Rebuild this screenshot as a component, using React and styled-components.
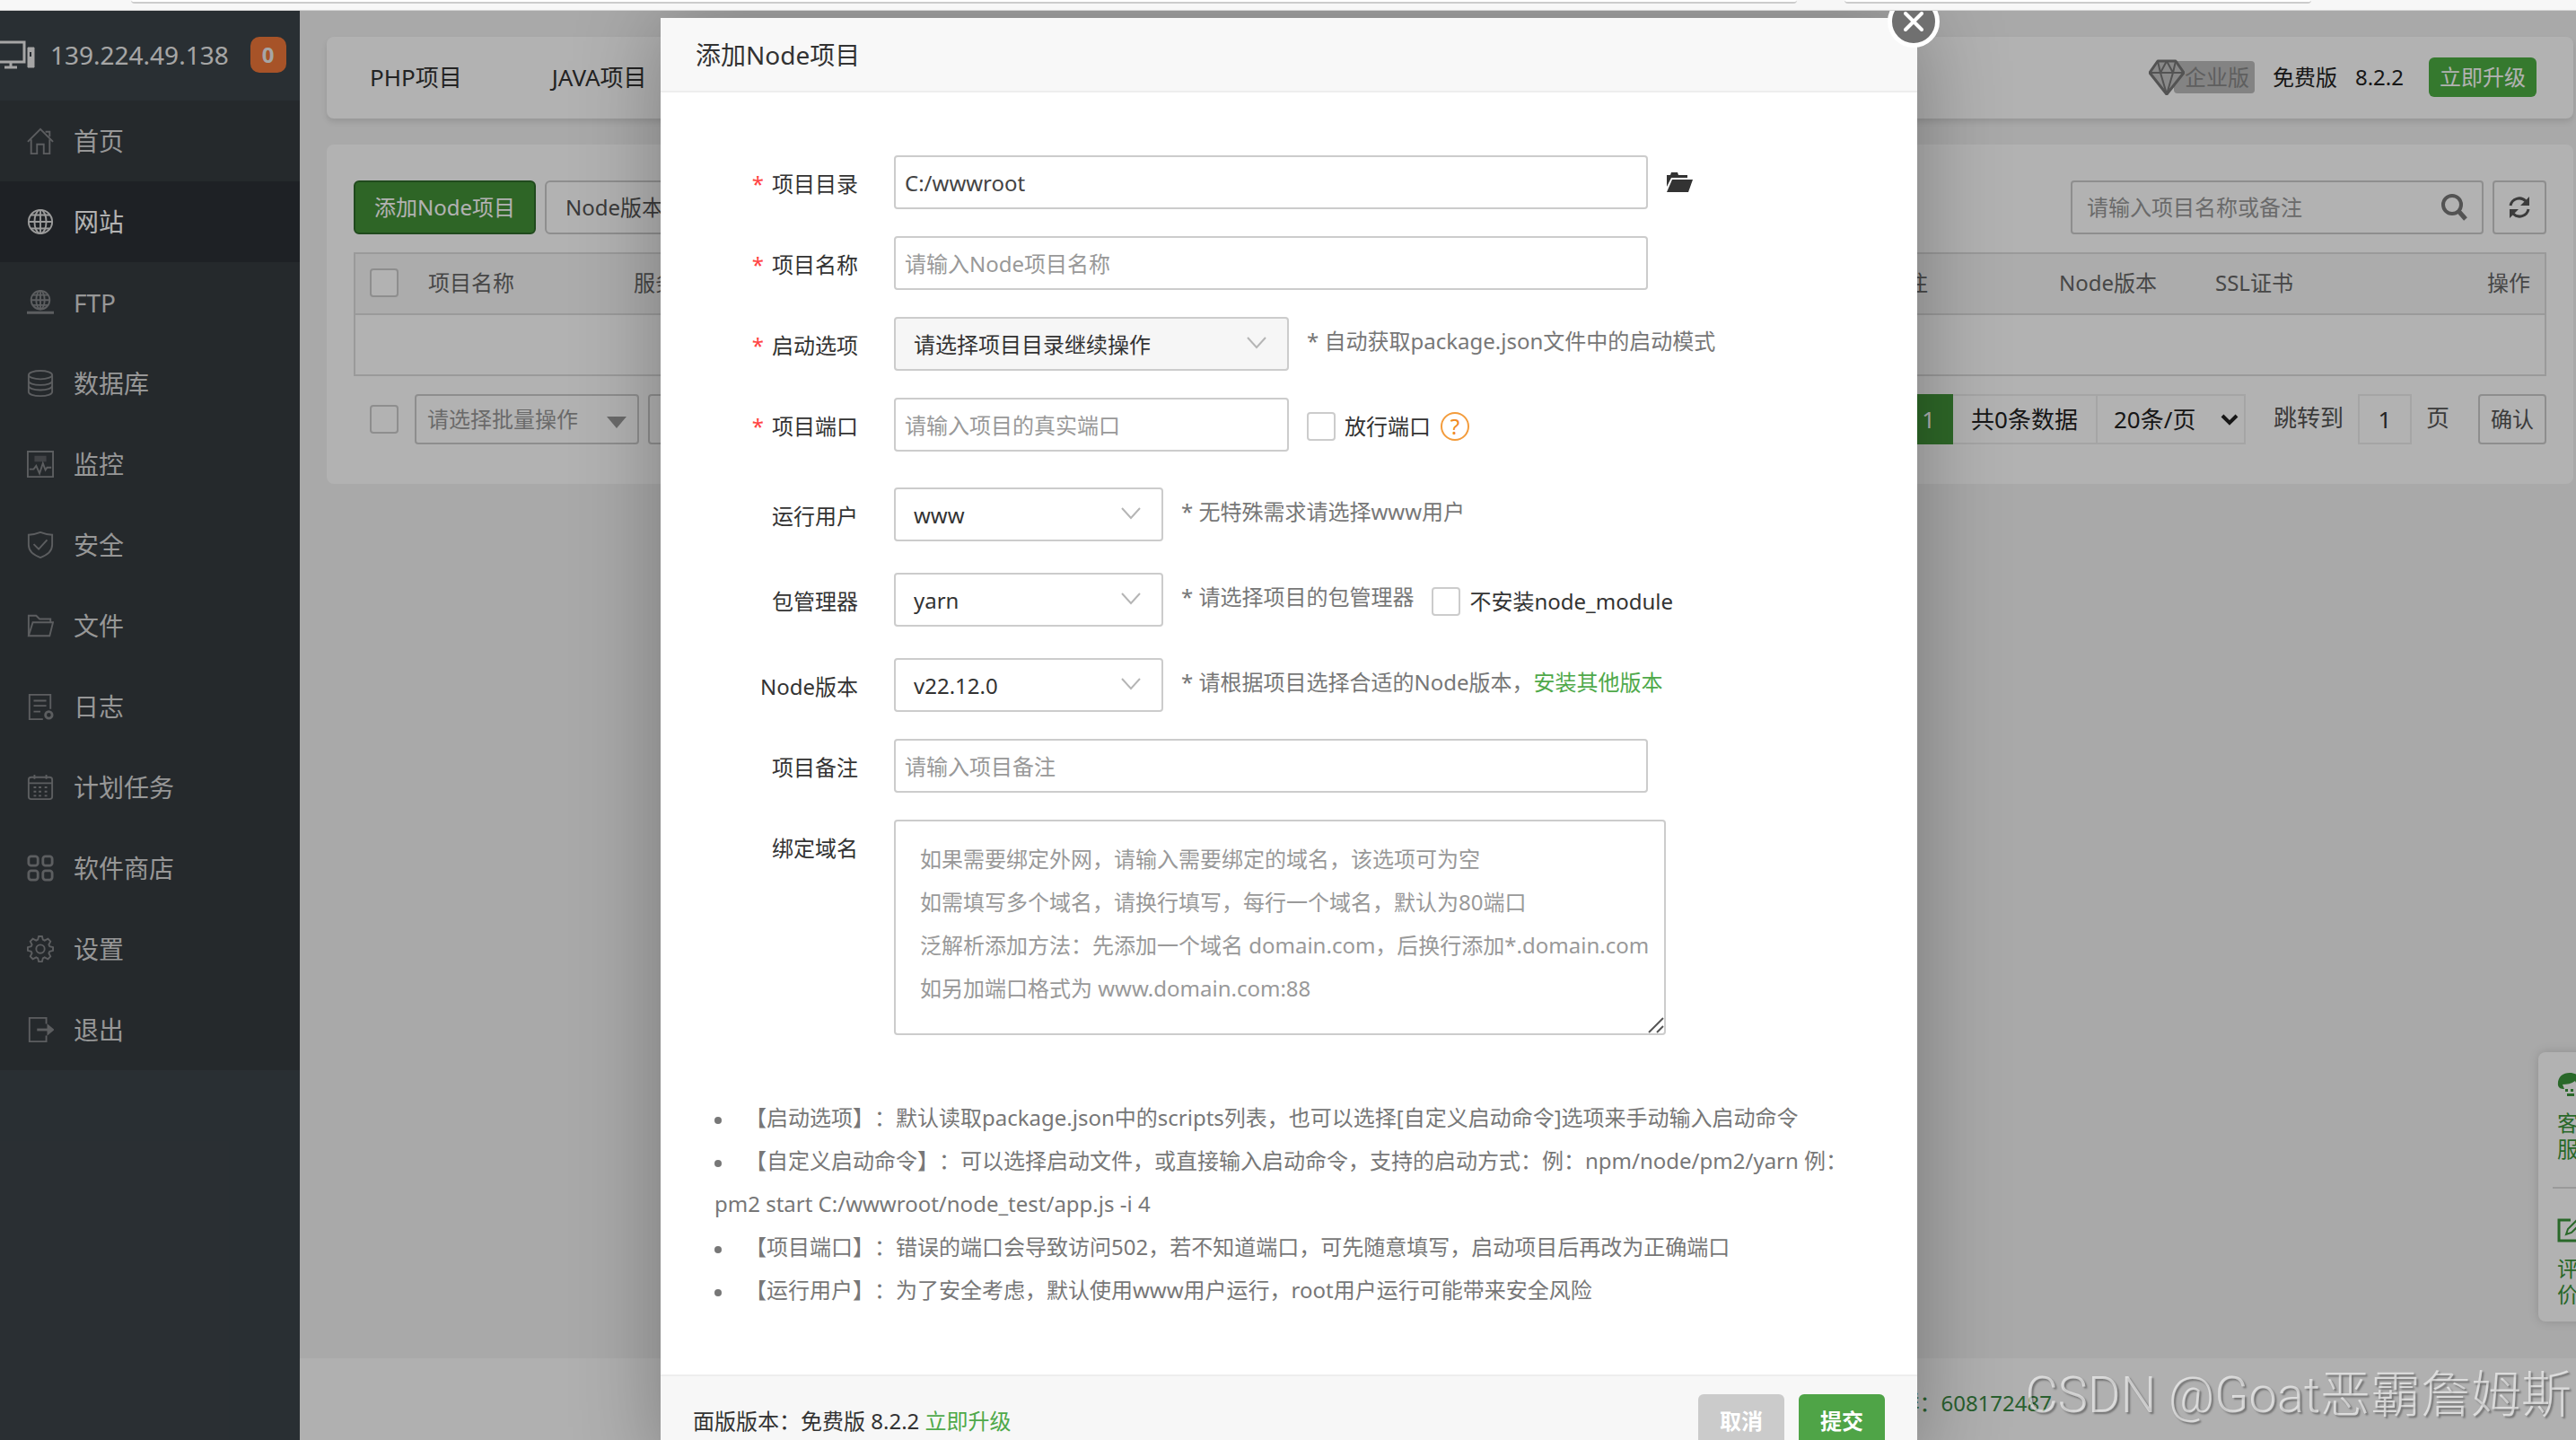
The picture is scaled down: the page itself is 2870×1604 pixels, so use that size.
import React from 'react';
import styled, { createGlobalStyle } from 'styled-components';

const menus = [
  { name: '首页', icon: 'home' },
  { name: '网站', icon: 'globe', active: true },
  { name: 'FTP', icon: 'ftp' },
  { name: '数据库', icon: 'database' },
  { name: '监控', icon: 'monitor' },
  { name: '安全', icon: 'shield' },
  { name: '文件', icon: 'folder' },
  { name: '日志', icon: 'log' },
  { name: '计划任务', icon: 'calendar' },
  { name: '软件商店', icon: 'grid' },
  { name: '设置', icon: 'gear' },
  { name: '退出', icon: 'exit' },
];

const tips = [
  '【启动选项】：默认读取package.json中的scripts列表，也可以选择[自定义启动命令]选项来手动输入启动命令',
  '【自定义启动命令】：可以选择启动文件，或直接输入启动命令，支持的启动方式：例：npm/node/pm2/yarn 例：pm2 start C:/wwwroot/node_test/app.js -i 4',
  '【项目端口】：错误的端口会导致访问502，若不知道端口，可先随意填写，启动项目后再改为正确端口',
  '【运行用户】：为了安全考虑，默认使用www用户运行，root用户运行可能带来安全风险',
];

const domainPlaceholder = [
  '如果需要绑定外网，请输入需要绑定的域名，该选项可为空',
  '如需填写多个域名，请换行填写，每行一个域名，默认为80端口',
  '泛解析添加方法：先添加一个域名 domain.com，后换行添加*.domain.com',
  '如另加端口格式为 www.domain.com:88',
].join('\n');

const menuIcons = {
  home: (
    <>
      <path d="M1 17 16 2l15 15" />
      <path d="M5 14v17h7V20h8v11h7V14" />
      <path d="M22 5h5v6" />
    </>
  ),
  globe: (
    <>
      <circle cx="16" cy="16" r="14" />
      <ellipse cx="16" cy="16" rx="7" ry="14" />
      <path d="M16 2v28M2 16h28M5 8h22M5 24h22" />
    </>
  ),
  ftp: (
    <>
      <circle cx="16" cy="13" r="11" />
      <ellipse cx="16" cy="13" rx="5" ry="11" />
      <path d="M16 2v22M5 13h22M7 7h18M7 19h18" />
      <path d="M0 28h32M12 28h8" strokeWidth="3" />
    </>
  ),
  database: (
    <>
      <ellipse cx="16" cy="6" rx="14" ry="5" />
      <path d="M2 6v20c0 3 6 5 14 5s14-2 14-5V6" />
      <path d="M2 13c0 3 6 5 14 5s14-2 14-5M2 19c0 3 6 5 14 5s14-2 14-5" />
    </>
  ),
  monitor: (
    <>
      <path d="M1 1h30v30H1z" />
      <path d="M10 7h12v5H10z" fill="currentColor" opacity="0.5" />
      <path d="M3 22h5l3-4 4 9 4-12 3 8 2-3h5" />
    </>
  ),
  shield: (
    <>
      <path d="M16 1c5 2 9 3 14 3v12c0 7-6 12-14 15C8 28 2 23 2 16V4c5 0 9-1 14-3z" />
      <path d="m8 15 6 6 10-11" />
    </>
  ),
  folder: (
    <>
      <path d="M2 28V4h9l4 4h13v4" />
      <path d="M2 28 7 12h24l-4 16z" />
    </>
  ),
  log: (
    <>
      <path d="M19 31H3V2h25v17" />
      <path d="M8 9h15M8 15h15M8 22h8" />
      <circle cx="26" cy="26" r="4" strokeWidth="3" />
    </>
  ),
  calendar: (
    <>
      <rect x="2" y="4" width="28" height="26" rx="3" />
      <path d="M2 11h28M9 1v5M23 1v5" />
      <path d="M8 16h3M14 16h3M21 16h3M8 21h3M14 21h3M21 21h3M8 26h3M14 26h3M21 26h3" />
    </>
  ),
  grid: (
    <>
      <rect x="2" y="2" width="11" height="11" rx="3" strokeWidth="3" />
      <rect x="19" y="2" width="11" height="11" rx="3" strokeWidth="3" />
      <rect x="2" y="19" width="11" height="11" rx="3" strokeWidth="3" />
      <rect x="19" y="19" width="11" height="11" rx="3" strokeWidth="3" />
    </>
  ),
  gear: (
    <>
      <path d="M14 1h4l1 4 2 1 4-2 3 3-2 4 1 2 4 1v4l-4 1-1 2 2 4-3 3-4-2-2 1-1 4h-4l-1-4-2-1-4 2-3-3 2-4-1-2-4-1v-4l4-1 1-2-2-4 3-3 4 2 2-1z" />
      <circle cx="16" cy="16" r="5" />
    </>
  ),
  exit: (
    <>
      <path d="M23 9V2H3v28h20v-7" />
      <path d="M12 16h14" strokeWidth="3" />
      <path d="m25 11 6 5-6 5z" fill="currentColor" />
    </>
  ),
};

const MenuIcon = ({ name }) => (
  <svg width="30" height="30" viewBox="0 0 32 32" fill="none" stroke="currentColor" strokeWidth="2">
    {menuIcons[name]}
  </svg>
);

const Chevron = () => (
  <ChevronSvg width="22" height="14" viewBox="0 0 22 14" fill="none" stroke="#b5b5b5" strokeWidth="2">
    <path d="m1 1 10 11L21 1" />
  </ChevronSvg>
);

const Field = ({ id, label, required, space, children }) => (
  <Row $space={space}>
    <Label htmlFor={id}>
      {required && <Star>*</Star>}
      {label}
    </Label>
    <Controls>{children}</Controls>
  </Row>
);

const SelectField = ({ id, value, wide, disabled }) => (
  <SelectBox $wide={wide}>
    <Select id={id} defaultValue={value} disabled={disabled}>
      <option>{value}</option>
    </Select>
    <Chevron />
  </SelectBox>
);

const Sidebar = () => (
  <Side>
    <SideHead>
      <svg width="40" height="32" viewBox="0 0 40 32" fill="none" stroke="currentColor" strokeWidth="3">
        <path d="M-4 2h31v22H-4M5 30h14M12 24v6" />
        <path d="M31 8h7v22h-7z" fill="currentColor" strokeWidth="1" />
        <path d="M34 13v5" stroke="#3c4349" strokeWidth="2" />
      </svg>
      <span>139.224.49.138</span>
      <Badge>0</Badge>
    </SideHead>
    <Menu>
      {menus.map((m) => (
        <MenuItem key={m.name} href="#" $active={m.active}>
          <MenuIcon name={m.icon} />
          <span>{m.name}</span>
        </MenuItem>
      ))}
    </Menu>
  </Side>
);

const ProjectPanel = () => (
  <Card>
    <Toolbar>
      <Group>
        <ToolButton $primary>添加Node项目</ToolButton>
        <ToolButton>Node版本管理器</ToolButton>
      </Group>
      <Group>
        <Search>
          <SearchInput aria-label="搜索项目" placeholder="请输入项目名称或备注" />
          <svg width="30" height="30" viewBox="0 0 30 30" fill="none" stroke="#777" strokeWidth="4">
            <circle cx="13" cy="12" r="10" />
            <path d="m20 19 8 9" strokeWidth="5" />
          </svg>
        </Search>
        <RefreshButton aria-label="刷新">
          <svg width="26" height="26" viewBox="0 0 26 26" fill="none" stroke="currentColor" strokeWidth="3">
            <path d="M3 11a10 10 0 0 1 17-5M23 15a10 10 0 0 1-17 5" />
            <path d="M24 1v10H14zM2 25V15h10z" fill="currentColor" stroke="none" />
          </svg>
        </RefreshButton>
      </Group>
    </Toolbar>

    <Table>
      <colgroup>
        <col width="66" />
        <col width="229" />
        <col />
        <col width="194" />
        <col width="174" />
        <col width="384" />
      </colgroup>
      <thead>
        <tr>
          <CheckCell><Checkbox type="checkbox" aria-label="全选" /></CheckCell>
          <th>项目名称</th>
          <th>服务状态</th>
          <th>备注</th>
          <th>Node版本</th>
          <th><Spread>SSL证书<span>操作</span></Spread></th>
        </tr>
      </thead>
      <tbody>
        <tr><td colSpan="6" /></tr>
      </tbody>
    </Table>

    <Toolbar>
      <Batch>
        <Checkbox type="checkbox" aria-label="批量选择" />
        <BatchSelectBox>
          <BatchSelect aria-label="批量操作" defaultValue="">
            <option value="">请选择批量操作</option>
          </BatchSelect>
          <BatchArrow />
        </BatchSelectBox>
        <SmallButton>批量操作</SmallButton>
      </Batch>
      <Pager>
        <PageNow>1</PageNow>
        <PageTotal>共0条数据</PageTotal>
        <PageSizeBox>
          <PageSize aria-label="每页条数" defaultValue="20">
            <option value="20">20条/页</option>
          </PageSize>
          <svg width="20" height="14" viewBox="0 0 20 14" fill="none" stroke="#222" strokeWidth="4">
            <path d="m2 2 8 8 8-8" />
          </svg>
        </PageSizeBox>
        <JumpLabel htmlFor="jump">跳转到</JumpLabel>
        <JumpInput id="jump" defaultValue="1" />
        <PageUnit>页</PageUnit>
        <SmallButton>确认</SmallButton>
      </Pager>
    </Toolbar>
  </Card>
);

const NodeDialog = () => (
  <Dialog role="dialog" aria-labelledby="dialog-title">
    <CloseButton aria-label="关闭">
      <svg width="22" height="22" viewBox="0 0 22 22" stroke="#fff" strokeWidth="4" strokeLinecap="round">
        <path d="m2 2 18 18M20 2 2 20" />
      </svg>
    </CloseButton>
    <DialogHead id="dialog-title">添加Node项目</DialogHead>

    <Form>
      <Field id="path" label="项目目录" required>
        <Input id="path" defaultValue="C:/wwwroot" />
        <FolderButton aria-label="选择目录">
          <svg width="30" height="24" viewBox="0 0 30 24" fill="#333">
            <path d="M1 17V4h4l1-3h7l1 3h10v3H6z" />
            <path d="M7 9h23l-5 14H1z" />
          </svg>
        </FolderButton>
      </Field>
      <Field id="name" label="项目名称" required>
        <Input id="name" placeholder="请输入Node项目名称" />
      </Field>
      <Field id="script" label="启动选项" required>
        <SelectField id="script" value="请选择项目目录继续操作" wide disabled />
        <Hint>* 自动获取package.json文件中的启动模式</Hint>
      </Field>
      <Field id="port" label="项目端口" required space={40}>
        <Input id="port" placeholder="请输入项目的真实端口" $short />
        <CheckLabel>
          <Checkbox type="checkbox" />
          放行端口
        </CheckLabel>
        <Help href="#" aria-label="帮助">?</Help>
      </Field>
      <Field id="user" label="运行用户" space={35}>
        <SelectField id="user" value="www" />
        <Hint>* 无特殊需求请选择www用户</Hint>
      </Field>
      <Field id="manager" label="包管理器" space={35}>
        <SelectField id="manager" value="yarn" />
        <Hint>* 请选择项目的包管理器</Hint>
        <CheckLabel>
          <Checkbox type="checkbox" />
          不安装node_module
        </CheckLabel>
      </Field>
      <Field id="version" label="Node版本">
        <SelectField id="version" value="v22.12.0" />
        <Hint>* 请根据项目选择合适的Node版本，<Link href="#">安装其他版本</Link></Hint>
      </Field>
      <Field id="remark" label="项目备注">
        <Input id="remark" placeholder="请输入项目备注" />
      </Field>
      <Field id="domain" label="绑定域名" space={68}>
        <TextAreaBox>
          <TextArea id="domain" placeholder={domainPlaceholder} />
          <svg width="18" height="18" viewBox="0 0 18 18" stroke="#555" strokeWidth="2">
            <path d="M1 17 17 1M10 17l7-7" />
          </svg>
        </TextAreaBox>
      </Field>
    </Form>

    <Tips>
      {tips.map((t) => (
        <li key={t}>{t}</li>
      ))}
    </Tips>

    <DialogFoot>
      <span>面版版本：免费版 8.2.2 <Link href="#">立即升级</Link></span>
      <FootButtons>
        <FootButton>取消</FootButton>
        <FootButton $primary>提交</FootButton>
      </FootButtons>
    </DialogFoot>
  </Dialog>
);

const App = () => (
  <Shell>
    <GlobalStyle />
    <BrowserBar>
      <AddressPill $grow={1855} />
      <AddressPill $grow={520} />
    </BrowserBar>
    <Viewport>
      <Sidebar />
      <Main>
        <Content>
          <NavCard>
            <NavLinks>
              <a href="#">PHP项目</a>
              <a href="#">JAVA项目</a>
            </NavLinks>
            <Version>
              <Enterprise>
                <svg width="40" height="40" viewBox="0 0 40 40" fill="#c4c4c4" stroke="#777" strokeWidth="2" strokeLinejoin="round">
                  <path d="M10 2h20l9 13-19 24L1 15z" strokeWidth="3" />
                  <path d="M1 15h38M10 2l3 13 7 24 7-24 3-13M13 15l7-13 7 13" fill="none" />
                </svg>
                <span>企业版</span>
              </Enterprise>
              <span>免费版</span>
              <span>8.2.2</span>
              <Upgrade>立即升级</Upgrade>
            </Version>
          </NavCard>
          <ProjectPanel />
        </Content>
        <Footer>QQ群：608172487</Footer>
      </Main>

      <Service>
        <ServiceItem href="#">
          <svg width="28" height="28" viewBox="0 0 28 28" fill="currentColor">
            <path d="M1 15C0 6 6 1 14 1s14 5 13 14l-3 3c-2-4-3-6-4-8-4 3-9 4-14 4l2 5c-4 0-6-1-7-4z" />
            <path d="M9 19h3v3H9zM15 19h3v3h-3zM11 24h8v3h-8z" />
          </svg>
          客服
        </ServiceItem>
        <ServiceItem href="#">
          <svg width="28" height="28" viewBox="0 0 28 28" fill="none" stroke="currentColor" strokeWidth="3">
            <path d="M15 3H2v23h23V15" />
            <path d="m10 19 2-6L23 2l4 4-11 11z" strokeWidth="2" />
          </svg>
          评价
        </ServiceItem>
      </Service>

      <Overlay>
        <NodeDialog />
      </Overlay>
      <Watermark>CSDN @Goat恶霸詹姆斯</Watermark>
    </Viewport>
  </Shell>
);

export default App;

const GlobalStyle = createGlobalStyle`
  * {
    box-sizing: border-box;
  }

  body {
    margin: 0;
    font: 24px/32px "Noto Sans", "Noto Sans CJK SC", sans-serif;
    color: #333;
    text-spacing-trim: space-all;
  }

  button, input, select, textarea {
    font: inherit;
    color: inherit;
    margin: 0;
  }

  button {
    cursor: pointer;
    white-space: nowrap;
  }

  a {
    color: inherit;
    text-decoration: none;
  }

  svg {
    display: block;
    flex: none;
  }
`;

const Shell = styled.div`
  display: flex;
  flex-direction: column;
  height: 100vh;
`;

const BrowserBar = styled.div`
  display: flex;
  gap: 53px;
  flex: none;
  height: 12px;
  padding: 0 295px 0 146px;
  background-color: #f7f7f7;
  border-bottom: 1px solid #d5d5d5;
`;

const AddressPill = styled.div`
  flex: ${(p) => p.$grow} 1 0;
  height: 4px;
  background-color: #fff;
  border-bottom: 2px solid #ccc;
  border-radius: 0 0 20px 20px;
`;

const Viewport = styled.div`
  position: relative;
  display: flex;
  flex: 1;
  min-height: 0;
  overflow: hidden;
  background-color: #f2f2f2;
`;

const Side = styled.aside`
  flex: none;
  width: 334px;
  background-color: #3c4449;
`;

const SideHead = styled.div`
  display: flex;
  align-items: center;
  gap: 16px;
  height: 100px;
  padding-bottom: 2px;
  font-size: 28px;
  color: #eee;
`;

const Badge = styled.span`
  width: 40px;
  margin-left: 8px;
  border-radius: 10px;
  background-color: #f0783a;
  font-size: 24px;
  font-weight: 700;
  line-height: 40px;
  text-align: center;
`;

const Menu = styled.nav`
  background-color: #363b40;
`;

const MenuItem = styled.a`
  display: flex;
  align-items: center;
  gap: 22px;
  height: 90px;
  padding-left: 30px;
  font-size: 28px;
  color: ${(p) => (p.$active ? '#fff' : '#d8d8d8')};
  background-color: ${(p) => (p.$active ? '#2c3035' : 'transparent')};

  svg {
    color: ${(p) => (p.$active ? '#ddd' : '#85878a')};
  }
`;

const Main = styled.main`
  display: flex;
  flex: 1;
  flex-direction: column;
  min-width: 0;
`;

const Content = styled.div`
  display: flex;
  flex: 1;
  flex-direction: column;
  gap: 29px;
  padding: 29px 3px 0 30px;
`;

const NavCard = styled.div`
  display: flex;
  justify-content: space-between;
  align-items: center;
  height: 91px;
  padding: 0 41px 2px 48px;
  border-radius: 8px;
  background-color: #fff;
  box-shadow: 0 4px 6px rgba(0, 0, 0, 0.1);
`;

const NavLinks = styled.nav`
  display: flex;
  gap: 100px;
  font-size: 26px;
`;

const Version = styled.div`
  display: flex;
  align-items: center;
  gap: 20px;
  color: #222;
`;

const Enterprise = styled.div`
  display: flex;
  align-items: center;
  color: #888;

  svg {
    position: relative;
    margin-right: -12px;
  }

  span {
    padding: 0 6px 0 12px;
    border-radius: 4px;
    background-color: #bcbcbc;
    line-height: 36px;
  }
`;

const Upgrade = styled.button`
  height: 44px;
  margin-left: 8px;
  padding: 0 12px;
  border: 0;
  border-radius: 6px;
  background-color: #4cae43;
  color: #fff;
`;

const Card = styled.section`
  display: flex;
  flex-direction: column;
  gap: 20px;
  padding: 40px 30px 44px;
  border-radius: 8px;
  background-color: #fff;
`;

const Toolbar = styled.div`
  display: flex;
  justify-content: space-between;
`;

const Group = styled.div`
  display: flex;
  gap: 10px;
`;

const ToolButton = styled.button`
  height: 60px;
  padding: 0 21px;
  border: 2px solid ${(p) => (p.$primary ? '#2f6b2a' : '#ccc')};
  border-radius: 6px;
  background-color: ${(p) => (p.$primary ? '#439137' : '#fff')};
  color: ${(p) => (p.$primary ? '#fff' : '#555')};
`;

const Search = styled.div`
  display: flex;
  align-items: center;
  width: 460px;
  height: 60px;
  padding: 0 16px;
  border: 2px solid #ccc;
  border-radius: 4px;
`;

const SearchInput = styled.input`
  flex: 1;
  min-width: 0;
  padding: 0;
  border: 0;
  background: none;

  &::placeholder {
    color: #999;
  }
`;

const RefreshButton = styled.button`
  display: flex;
  align-items: center;
  justify-content: center;
  width: 60px;
  height: 60px;
  padding: 0;
  border: 2px solid #ccc;
  border-radius: 4px;
  background-color: #fff;
  color: #555;
`;

const Table = styled.table`
  width: 100%;
  table-layout: fixed;
  border-collapse: collapse;
  border: 2px solid #ddd;
  color: #666;

  th {
    height: 68px;
    padding: 0 16px 2px;
    border-bottom: 2px solid #ddd;
    background-color: #f6f6f6;
    font-weight: 400;
    text-align: left;
  }

  td {
    height: 68px;
    padding: 0;
  }
`;

const CheckCell = styled.th`
  input {
    display: block;
  }
`;

const Spread = styled.div`
  display: flex;
  justify-content: space-between;
`;

const Checkbox = styled.input`
  flex: none;
  width: 32px;
  height: 32px;
  appearance: none;
  border: 2px solid #ccc;
  border-radius: 4px;
  background-color: #fff;
`;

const Batch = styled.div`
  display: flex;
  align-items: center;
  gap: 10px;
  padding-left: 18px;
`;

const BatchSelectBox = styled.div`
  position: relative;
  margin-left: 8px;
`;

const BatchSelect = styled.select`
  width: 250px;
  height: 56px;
  padding: 0 12px;
  appearance: none;
  border: 2px solid #ccc;
  border-radius: 4px;
  background-color: #fff;
  color: #999;
`;

const BatchArrow = styled.i`
  position: absolute;
  top: 25px;
  right: 14px;
  border: 11px solid transparent;
  border-top: 13px solid #999;
  border-bottom: 0;
  pointer-events: none;
`;

const SmallButton = styled.button`
  height: 56px;
  padding: 0 12px;
  border: 2px solid #ccc;
  border-radius: 4px;
  background-color: #fff;
  color: #555;
`;

const Pager = styled.div`
  display: flex;
  font-size: 26px;
  line-height: 52px;

  button {
    font-size: 24px;
  }
`;

const PageNow = styled.span`
  padding: 2px 20px;
  background-color: #42963a;
  color: #fff;
`;

const PageTotal = styled.span`
  padding: 0 20px;
  border: 2px solid #ececec;
  border-left: 0;
  color: #222;
`;

const PageSizeBox = styled.div`
  position: relative;
  margin-right: 31px;

  svg {
    position: absolute;
    top: 22px;
    right: 8px;
    pointer-events: none;
  }
`;

const PageSize = styled.select`
  width: 165px;
  height: 56px;
  padding: 0 18px;
  appearance: none;
  border: 2px solid #ececec;
  border-left: 0;
  background-color: #fff;
  color: #222;
`;

const JumpLabel = styled.label`
  margin-right: 16px;
  color: #555;
`;

const JumpInput = styled.input`
  width: 60px;
  height: 56px;
  padding: 0;
  border: 2px solid #ececec;
  background-color: #fff;
  text-align: center;
`;

const PageUnit = styled.span`
  margin: 0 32px 0 16px;
  color: #555;
`;

const Footer = styled.footer`
  height: 91px;
  padding: 0 584px 0 0;
  background-color: #fdfdfd;
  color: #3b8a44;
  line-height: 100px;
  text-align: right;
`;

const Service = styled.div`
  position: absolute;
  top: 1160px;
  right: -28px;
  width: 70px;
  border-radius: 8px;
  background-color: #fff;
  box-shadow: 0 0 12px rgba(0, 0, 0, 0.15);
`;

const ServiceItem = styled.a`
  display: flex;
  flex-direction: column;
  height: 150px;
  margin-left: 16px;
  padding: 22px 22px 0 5px;
  line-height: 29px;
  color: #3b963b;

  svg {
    margin-bottom: 14px;
  }

  & + & {
    padding-top: 32px;
    border-top: 2px solid #ddd;
  }
`;

const Overlay = styled.div`
  position: absolute;
  inset: 0;
  display: flex;
  justify-content: center;
  align-items: flex-start;
  padding: 8px 0 0 2px;
  background-color: rgba(0, 0, 0, 0.3);
`;

const Dialog = styled.section`
  position: relative;
  width: 1400px;
  background-color: #fff;
  box-shadow: 2px 2px 92px rgba(0, 0, 0, 0.3);
`;

const CloseButton = styled.button`
  position: absolute;
  top: -25px;
  right: -25px;
  display: flex;
  align-items: center;
  justify-content: center;
  width: 58px;
  height: 58px;
  padding: 0;
  border: 5px solid #fff;
  border-radius: 50%;
  background-color: #707070;
`;

const DialogHead = styled.h2`
  height: 83px;
  margin: 0;
  padding-left: 39px;
  border-bottom: 2px solid #eee;
  background-color: #f8f8f8;
  font-size: 28px;
  font-weight: 400;
  line-height: 82px;
`;

const Form = styled.form`
  padding-top: 70px;
`;

const Row = styled.div`
  display: flex;
  gap: 40px;
  margin-bottom: ${(p) => p.$space || 30}px;
`;

const Label = styled.label`
  width: 220px;
  height: 60px;
  line-height: 64px;
  text-align: right;
`;

const Star = styled.span`
  margin-right: 9px;
  color: #f44;
`;

const Controls = styled.div`
  display: flex;
  align-items: center;
  gap: 20px;
`;

const Input = styled.input`
  width: ${(p) => (p.$short ? 440 : 840)}px;
  height: 60px;
  padding: 0 10px;
  border: 2px solid #ccc;
  border-radius: 4px;
  color: #444;

  &::placeholder {
    color: #999;
  }
`;

const SelectBox = styled.div`
  position: relative;
  width: ${(p) => (p.$wide ? 440 : 300)}px;
`;

const Select = styled.select`
  display: block;
  width: 100%;
  height: 60px;
  padding: 2px 20px 0;
  appearance: none;
  border: 2px solid #ccc;
  border-radius: 4px;
  background-color: #fff;

  &:disabled {
    background-color: #f6f6f6;
    color: #333;
    opacity: 1;
  }
`;

const ChevronSvg = styled.svg`
  position: absolute;
  top: 22px;
  right: 25px;
  pointer-events: none;
`;

const FolderButton = styled.button`
  padding: 0;
  border: 0;
  background: none;
`;

const Hint = styled.span`
  padding-bottom: 6px;
  color: #777;
`;

const Link = styled.a`
  color: #4fa94a;
`;

const CheckLabel = styled.label`
  display: flex;
  align-items: center;
  gap: 10px;
  padding-top: 4px;
`;

const Help = styled.a`
  width: 32px;
  margin: 4px 0 0 -9px;
  border: 2px solid #f39c3c;
  border-radius: 50%;
  color: #f08a24;
  line-height: 28px;
  text-align: center;
`;

const TextAreaBox = styled.div`
  position: relative;

  svg {
    position: absolute;
    right: 2px;
    bottom: 2px;
    pointer-events: none;
  }
`;

const TextArea = styled.textarea`
  display: block;
  width: 860px;
  height: 240px;
  padding: 18px 10px 20px 27px;
  border: 2px solid #ccc;
  border-radius: 4px;
  line-height: 48px;

  &::placeholder {
    color: #999;
  }

  &::-webkit-resizer {
    background: transparent;
  }
`;

const Tips = styled.ul`
  margin: 0;
  padding: 0 60px 70px;
  list-style: none;
  line-height: 48px;
  color: #777;

  li::before {
    content: '';
    display: inline-block;
    width: 8px;
    height: 8px;
    margin-right: 26px;
    border-radius: 50%;
    background-color: #777;
    vertical-align: middle;
  }
`;

const DialogFoot = styled.footer`
  display: flex;
  justify-content: space-between;
  align-items: center;
  padding: 20px 36px;
  border-top: 2px solid #eee;
  background-color: #f7f7f7;
`;

const FootButtons = styled.div`
  display: flex;
  gap: 16px;
`;

const FootButton = styled.button`
  width: 96px;
  height: 60px;
  padding: 0;
  border: 0;
  border-radius: 6px;
  background-color: ${(p) => (p.$primary ? '#4fa447' : '#cbcbcb')};
  color: #fff;
  font-weight: 700;
`;

const Watermark = styled.div`
  position: absolute;
  right: 5px;
  bottom: 18px;
  color: rgba(255, 255, 255, 0.6);
  font-family: Roboto, "Noto Sans CJK SC", sans-serif;
  font-size: 56px;
  font-weight: 300;
  line-height: 64px;
  text-shadow: 2px 2px 2px rgba(0, 0, 0, 0.35);
  white-space: nowrap;
  pointer-events: none;
`;
